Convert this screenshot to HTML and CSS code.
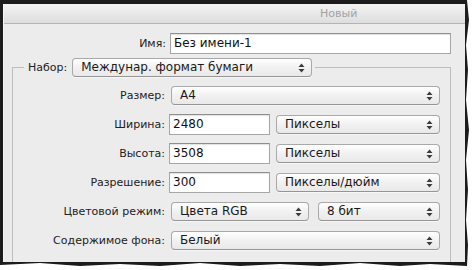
FILE: index.html
```html
<!DOCTYPE html>
<html lang="ru">
<head>
  <meta charset="UTF-8" />
  <title>Новый</title>
  <link rel="stylesheet" href="styles.css">
</head>
<body>
  <div class="frame">
    <div class="dialog">
      <!-- Заголовок окна -->
      <div class="titlebar">Новый</div>

      <!-- Имя документа -->
      <div class="row name-row">
        <span class="lbl">Имя:</span>
        <div class="field name-field">Без имени-1</div>
      </div>

      <!-- Набор -->
      <fieldset class="group">
        <legend class="group-legend">
          <span class="legend-lbl">Набор:</span>
          <div class="popup preset">Междунар. формат бумаги
            <svg class="arrows" width="7" height="10" viewBox="0 0 7 10"><path d="M3.5 0.5 L6.5 4 L0.5 4 Z M3.5 9.5 L6.5 6 L0.5 6 Z" /></svg>
          </div>
        </legend>

        <div class="row">
          <span class="lbl">Размер:</span>
          <div class="popup wide">A4
            <svg class="arrows" width="7" height="10" viewBox="0 0 7 10"><path d="M3.5 0.5 L6.5 4 L0.5 4 Z M3.5 9.5 L6.5 6 L0.5 6 Z" /></svg>
          </div>
        </div>

        <div class="row">
          <span class="lbl">Ширина:</span>
          <div class="field num">2480</div>
          <div class="popup unit">Пикселы
            <svg class="arrows" width="7" height="10" viewBox="0 0 7 10"><path d="M3.5 0.5 L6.5 4 L0.5 4 Z M3.5 9.5 L6.5 6 L0.5 6 Z" /></svg>
          </div>
        </div>

        <div class="row">
          <span class="lbl">Высота:</span>
          <div class="field num">3508</div>
          <div class="popup unit">Пикселы
            <svg class="arrows" width="7" height="10" viewBox="0 0 7 10"><path d="M3.5 0.5 L6.5 4 L0.5 4 Z M3.5 9.5 L6.5 6 L0.5 6 Z" /></svg>
          </div>
        </div>

        <div class="row">
          <span class="lbl">Разрешение:</span>
          <div class="field num">300</div>
          <div class="popup unit">Пикселы/дюйм
            <svg class="arrows" width="7" height="10" viewBox="0 0 7 10"><path d="M3.5 0.5 L6.5 4 L0.5 4 Z M3.5 9.5 L6.5 6 L0.5 6 Z" /></svg>
          </div>
        </div>

        <div class="row">
          <span class="lbl">Цветовой режим:</span>
          <div class="popup mode">Цвета RGB
            <svg class="arrows" width="7" height="10" viewBox="0 0 7 10"><path d="M3.5 0.5 L6.5 4 L0.5 4 Z M3.5 9.5 L6.5 6 L0.5 6 Z" /></svg>
          </div>
          <div class="popup bits">8 бит
            <svg class="arrows" width="7" height="10" viewBox="0 0 7 10"><path d="M3.5 0.5 L6.5 4 L0.5 4 Z M3.5 9.5 L6.5 6 L0.5 6 Z" /></svg>
          </div>
        </div>

        <div class="row">
          <span class="lbl">Содержимое фона:</span>
          <div class="popup wide">Белый
            <svg class="arrows" width="7" height="10" viewBox="0 0 7 10"><path d="M3.5 0.5 L6.5 4 L0.5 4 Z M3.5 9.5 L6.5 6 L0.5 6 Z" /></svg>
          </div>
        </div>
      </fieldset>
    </div>
  </div>
</body>
</html>
```

FILE: styles.css
```css
/* --- Grundlage --- */
body {
  margin: 0;
  padding: 0;
  background: #fff;
  font-family: "DejaVu Sans", Verdana, sans-serif;
  font-size: 11px;
  color: #222;
}

/* --- dunkler Rahmen (abgerissener Ausschnitt) --- */
.frame {
  width: 469px;
  height: 266px;
  box-sizing: border-box;
  padding: 4px 4px 4px 3px;
  background: #1c1c1c;
  clip-path: polygon(0 0, 467px 0, 469px 20px, 466px 45px, 468px 70px, 466px 100px,
    469px 130px, 466px 160px, 468px 190px, 466px 220px, 468px 245px, 467px 266px,
    430px 264px, 400px 266px, 360px 263px, 320px 266px, 280px 264px, 240px 266px,
    200px 263px, 160px 266px, 120px 264px, 80px 266px, 40px 263px, 0 265px);
}
.dialog {
  height: 100%;
  background: #ececec;
  overflow: hidden;
  border-left: 1px solid #f6f6f6;
  box-sizing: border-box;
}

/* --- Titelleiste --- */
.titlebar {
  height: 19px;
  line-height: 19px;
  padding-left: 316px;
  background: linear-gradient(#f3f3f3, #dedede);
  border-bottom: 1px solid #b4b4b4;
  color: #a2a2a2;
  font-size: 11px;
}

/* --- Zeilen --- */
.row {
  display: flex;
  align-items: center;
  height: 21px;
  margin-bottom: 8px;
}
.lbl {
  width: 152px;
  padding-right: 4px;
  text-align: right;
  flex-shrink: 0;
}
.name-row {
  margin-top: 9px;
  margin-bottom: 4px;
}
.name-row .lbl {
  width: 162px;
}

/* --- Textfelder --- */
.field {
  height: 21px;
  box-sizing: border-box;
  padding: 0 3px;
  line-height: 19px;
  background: #fff;
  border: 1px solid #a6a6a6;
  border-top-color: #8e8e8e;
  box-shadow: inset 0 1px 1px rgba(0, 0, 0, 0.12);
  font-size: 12px;
  color: #111;
}
.name-field {
  width: 281px;
}
.num {
  width: 101px;
}

/* --- Popup-Menüs --- */
.popup {
  position: relative;
  height: 19px;
  box-sizing: border-box;
  padding-left: 8px;
  line-height: 17px;
  background: linear-gradient(#ffffff, #f1f1f1 50%, #e9e9e9);
  border: 1px solid #a9a9a9;
  border-bottom-color: #959595;
  border-radius: 4px;
  box-shadow: 0 1px 0 rgba(255, 255, 255, 0.6);
  font-size: 12px;
  color: #1a1a1a;
}
.arrows {
  position: absolute;
  right: 6px;
  top: 4px;
  fill: #3c3c3c;
}
.wide {
  width: 269px;
  margin-left: 2px;
}
.unit {
  width: 164px;
  margin-left: 6px;
}
.mode {
  width: 138px;
  margin-left: 2px;
}
.bits {
  width: 122px;
  margin-left: 9px;
}

/* --- Gruppe "Набор" --- */
.group {
  margin: 0 0 0 8px;
  width: 439px;
  height: 260px;
  box-sizing: border-box;
  padding: 8px 0 0 0;
  border: 1px solid #bdbdbd;
}
.group-legend {
  display: flex;
  align-items: center;
  margin-left: 11px;
  padding: 0 3px 0 4px;
}
.legend-lbl {
  margin-right: 5px;
}
.preset {
  width: 240px;
}
```
